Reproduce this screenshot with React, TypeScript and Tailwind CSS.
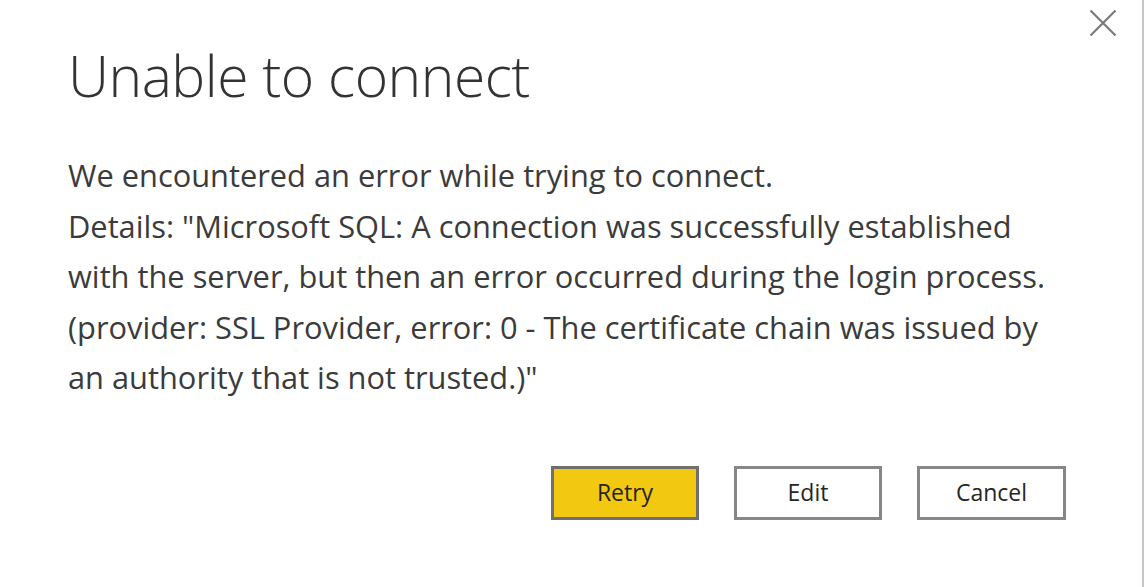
import React from "react";

export default function App() {
  return (
    <div className="w-[1145px] h-[587px] bg-white flex overflow-hidden" style={{ fontFamily: '"Open Sans", "Noto Sans", sans-serif' }}>
      <div className="flex-1 flex flex-col pl-[68px] pr-[40px]">
        <div className="flex justify-end pt-[9px] -mr-[15px] h-[37px]">
          <svg width="28" height="28" viewBox="0 0 28 28" className="text-[#7a7a7a]">
            <path d="M1.5 1.5 L26.5 26.5 M26.5 1.5 L1.5 26.5" stroke="currentColor" strokeWidth="2.2" fill="none" />
          </svg>
        </div>
        <h1 className="text-[57px] font-light text-[#333333] leading-[72px] mt-[2px] tracking-[-0.5px] whitespace-nowrap">Unable to connect</h1>
        <div className="mt-[39px] text-[30.8px] text-[#3b3b3b] leading-[50.5px] whitespace-nowrap">
          <p>We encountered an error while trying to connect.</p>
          <p>
            Details: "Microsoft SQL: A connection was successfully established
            <br />
            with the server, but then an error occurred during the login process.
            <br />
            (provider: SSL Provider, error: 0 - The certificate chain was issued by
            <br />
            an authority that is not trusted.)"
          </p>
        </div>
        <div className="flex justify-end gap-[35px] mt-[63px] pr-[36px]">
          <button className="w-[148px] h-[54px] bg-[#f2c811] border-[3px] border-[#6f6f6f] text-[23px] text-[#252525]">Retry</button>
          <button className="w-[148px] h-[54px] bg-white border-[3px] border-[#878787] text-[23px] text-[#252525]">Edit</button>
          <button className="w-[149px] h-[54px] bg-white border-[3px] border-[#878787] text-[23px] text-[#252525]">Cancel</button>
        </div>
      </div>
      <div className="w-[2px] h-full bg-[#c6c6c6] mr-[1px]" />
    </div>
  );
}
